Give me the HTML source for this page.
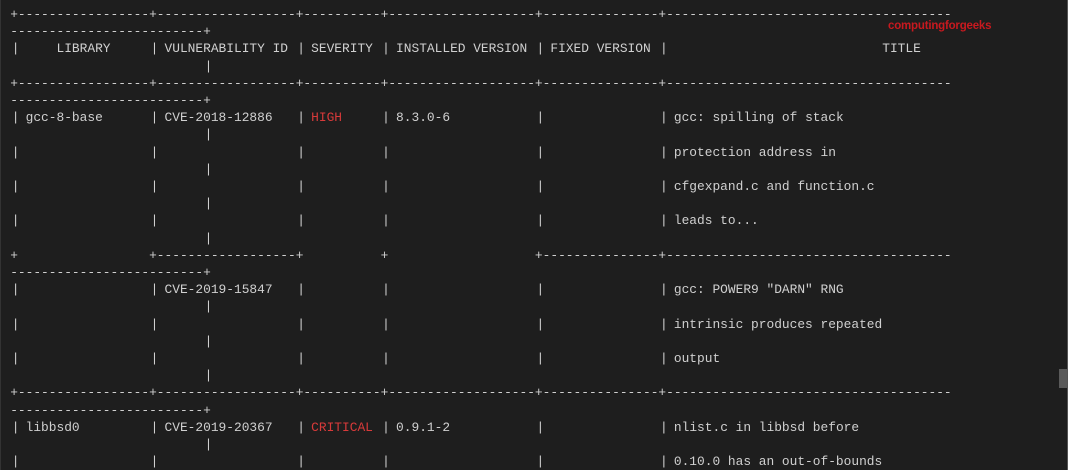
<!DOCTYPE html>
<html>
<head>
<meta charset="utf-8">
<style>
html,body{margin:0;padding:0;width:1068px;height:470px;overflow:hidden;background:#1e1e1e}
pre{position:absolute;left:10.2px;top:6px;margin:0;font-family:"Liberation Mono",monospace;font-size:12.87px;line-height:17.2px;color:#d0d0d0;white-space:pre;filter:blur(.35px)}
pre b{font-weight:normal;position:relative;left:1.5px}
.r{color:#d83a3a}
.wm{position:absolute;left:888px;top:19px;font-family:"Liberation Sans",sans-serif;font-size:11.5px;line-height:14px;font-weight:bold;color:#c8191f;letter-spacing:-.2px;filter:blur(.3px)}
.sb{position:absolute;left:1059px;top:369px;width:8px;height:19px;background:#5a5a5a}
.le{position:absolute;left:0;top:0;width:1px;height:470px;background:#333}
.re{position:absolute;right:0;top:0;width:1px;height:470px;background:#555}
</style>
</head>
<body>
<div class="le"></div>
<div class="re"></div>
<pre>+-----------------+------------------+----------+-------------------+---------------+-------------------------------------
-------------------------+
<b>|</b>     LIBRARY     <b>|</b> VULNERABILITY ID <b>|</b> SEVERITY <b>|</b> INSTALLED VERSION <b>|</b> FIXED VERSION <b>|</b>                            TITLE
                         <b>|</b>
+-----------------+------------------+----------+-------------------+---------------+-------------------------------------
-------------------------+
<b>|</b> gcc-8-base      <b>|</b> CVE-2018-12886   <b>|</b> <span class="r">HIGH</span>     <b>|</b> 8.3.0-6           <b>|</b>               <b>|</b> gcc: spilling of stack
                         <b>|</b>
<b>|</b>                 <b>|</b>                  <b>|</b>          <b>|</b>                   <b>|</b>               <b>|</b> protection address in
                         <b>|</b>
<b>|</b>                 <b>|</b>                  <b>|</b>          <b>|</b>                   <b>|</b>               <b>|</b> cfgexpand.c and function.c
                         <b>|</b>
<b>|</b>                 <b>|</b>                  <b>|</b>          <b>|</b>                   <b>|</b>               <b>|</b> leads to...
                         <b>|</b>
+                 +------------------+          +                   +---------------+-------------------------------------
-------------------------+
<b>|</b>                 <b>|</b> CVE-2019-15847   <b>|</b>          <b>|</b>                   <b>|</b>               <b>|</b> gcc: POWER9 "DARN" RNG
                         <b>|</b>
<b>|</b>                 <b>|</b>                  <b>|</b>          <b>|</b>                   <b>|</b>               <b>|</b> intrinsic produces repeated
                         <b>|</b>
<b>|</b>                 <b>|</b>                  <b>|</b>          <b>|</b>                   <b>|</b>               <b>|</b> output
                         <b>|</b>
+-----------------+------------------+----------+-------------------+---------------+-------------------------------------
-------------------------+
<b>|</b> libbsd0         <b>|</b> CVE-2019-20367   <b>|</b> <span class="r">CRITICAL</span> <b>|</b> 0.9.1-2           <b>|</b>               <b>|</b> nlist.c in libbsd before
                         <b>|</b>
<b>|</b>                 <b>|</b>                  <b>|</b>          <b>|</b>                   <b>|</b>               <b>|</b> 0.10.0 has an out-of-bounds</pre>
<div class="wm">computingforgeeks</div>
<div class="sb"></div>
</body>
</html>
